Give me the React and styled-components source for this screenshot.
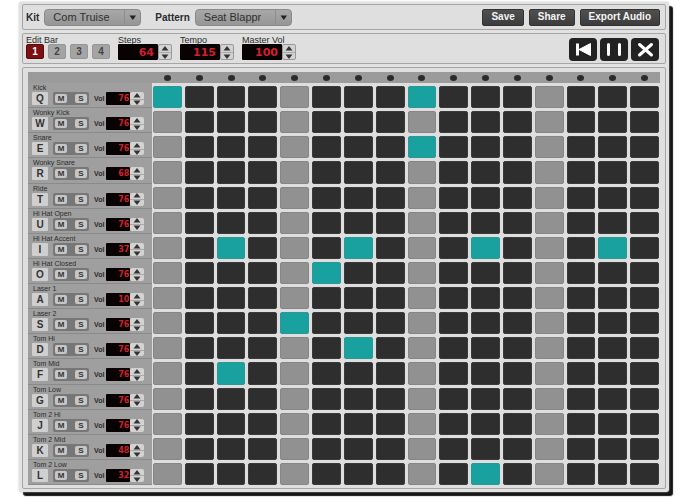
import React, { useState } from 'react'
import styled, { createGlobalStyle } from 'styled-components'


const GlobalStyle = createGlobalStyle`
* { box-sizing: border-box; }
body {
  margin: 0;
  background: #fff;
  color: #2b2b2b;
  font-family: "Liberation Sans", Arial, sans-serif;
}
button, input, select { font-family: inherit; margin: 0; }
button { cursor: pointer; }
`
const Page = styled.main`
padding: 2px 27px 5px 19px;
`
const Machine = styled.div`
display: flex;
flex-direction: column;
gap: 3px;
padding: 2px 3px 3px;
background: #e2e2e2;
border-radius: 3px;
box-shadow: 0 0 2px #bbb, 4px 4px 1px #141414;
`
const Panel = styled.section`
border: 1px solid #a6a6a6;
border-radius: 2px;
background: #dfdfdf;
`
const TopBar = styled(Panel)`
display: flex;
align-items: center;
height: 26px;
padding: 0 5px 0 3px;
`
const Field = styled.label`
display: flex;
align-items: center;
gap: 5px;
margin-right: 14px;
font-size: 10px;
font-weight: bold;
`
const SelectBox = styled.span`
display: flex;
position: relative;
svg {
  position: absolute;
  right: 0;
  top: 0;
  pointer-events: none;
}
`
const Select = styled.select`
appearance: none;
width: 97px;
height: 17px;
padding: 0 20px 0 8px;
border: 1px solid #8a8a8a;
border-radius: 4px;
background: linear-gradient(#a8a8a8, #969696);
color: #303030;
font-size: 11px;
`
const Actions = styled.div`
display: flex;
gap: 5px;
margin-left: auto;
`
const DarkButton = styled.button`
height: 17px;
padding: 0 8px;
border: 1px solid #333;
border-radius: 2px;
background: linear-gradient(#505050, #3c3c3c);
color: #f4f4f4;
font-size: 10px;
font-weight: bold;
line-height: 12px;
`
const ControlBar = styled(Panel)`
display: flex;
align-items: flex-start;
gap: 8px;
height: 31px;
padding: 2px 6px 0 3px;
`
const Group = styled.div`
display: flex;
flex-direction: column;
font-size: 9px;
line-height: 8px;
`
const BarButtons = styled.div`
display: flex;
gap: 4px;
`
const BarButton = styled.button`
width: 18px;
height: 15px;
padding: 0;
border: 1px solid ${({ $active }) => ($active ? '#5a0a0c' : '#969696')};
border-radius: 2px;
background: ${({ $active }) => ($active ? '#7c1013' : '#a4a4a4')};
color: ${({ $active }) => ($active ? '#fff' : '#444')};
font-size: 10px;
font-weight: bold;
line-height: 12px;
`
const Transport = styled.div`
display: flex;
align-self: center;
gap: 3px;
margin-left: auto;
`
const TransportButton = styled.button`
display: flex;
width: 28px;
height: 23px;
padding: 0;
border: 0;
border-radius: 4px;
background: #222;
`
const NumberBox = styled.span`
display: flex;
height: ${({ $small }) => ($small ? '13px' : '16px')};
`
const Lcd = styled.input`
width: ${({ $small }) => ($small ? '24px' : '40px')};
height: 100%;
padding: ${({ $small }) => ($small ? '0 1px 0 0' : '0 4px 0 0')};
border: 0;
border-radius: 1px;
background: #080203;
color: #d0202b;
font-family: "DejaVu Sans", Verdana, sans-serif;
font-size: ${({ $small }) => ($small ? '8px' : '11px')};
font-weight: bold;
text-align: right;
`
const Arrows = styled.span`
display: grid;
grid-template-rows: 1fr 1fr;
width: 14px;
border: ${({ $small }) => ($small ? '0' : '1px solid #999')};
border-radius: 2px;
background: #d3d3d3;
`
const Arrow = styled.button`
display: flex;
align-items: center;
justify-content: center;
min-height: 0;
padding: 0;
border: 0;
background: none;
& + & {
  border-top: 1px solid #aaa;
}
`
const Sequencer = styled(Panel)`
padding: 4px 5px 3px;
`
const Grid = styled.div`
display: grid;
grid-template-columns: 124px 1fr;
grid-template-rows: 11px repeat(16, 1fr);
height: 413px;
`
const Corner = styled.div`
background: #9b9b9b;
`
const Dots = styled.div`
display: grid;
grid-template-columns: repeat(16, 1fr);
column-gap: 3px;
align-items: center;
justify-items: center;
padding: 0 1px;
background: #9b9b9b;
`
const Dot = styled.span`
width: 7px;
height: 6px;
border-radius: 50%;
background: #2b2b2b;
`
const Track = styled.div`
display: flex;
flex-direction: column;
min-height: 0;
padding-left: 4px;
border-bottom: 1px solid #8a8a8a;
background: #9f9f9f;
`
const TrackName = styled.span`
font-size: 7px;
line-height: 9px;
padding-left: 1px;
`
const TrackControls = styled.div`
display: flex;
align-items: center;
`
const KeyButton = styled.button`
width: 16px;
height: 13px;
padding: 0;
border: 0;
border-radius: 1px;
background: #cfcfcf;
color: #333;
font-size: 10px;
font-weight: bold;
line-height: 13px;
`
const MuteSolo = styled.div`
display: flex;
justify-content: space-between;
align-items: center;
width: 36px;
height: 13px;
margin: 0 5px;
padding: 0 2px;
border-radius: 2px;
background: #777;
`
const SmallButton = styled.button`
width: 12px;
height: 9px;
padding: 0;
border: 0;
border-radius: 2px;
background: #c6c6c6;
color: #333;
font-size: 8px;
font-weight: bold;
line-height: 9px;
`
const Volume = styled.label`
display: flex;
align-items: center;
gap: 2px;
font-size: 7px;
font-weight: bold;
`
const Steps = styled.div`
display: grid;
grid-template-columns: repeat(16, 1fr);
gap: 3px;
min-height: 0;
padding: 3px 1px 0;
background: #dedede;
`
const Step = styled.button`
min-width: 0;
padding: 0;
border: 1px solid ${({ $on, $beat }) => ($on ? '#2b9796' : $beat ? '#868686' : '#3a3a3a')};
border-radius: 2px;
background: ${({ $on, $beat }) => ($on ? '#18a19f' : $beat ? '#919191' : '#2e2e2e')};
`

const TRACKS = [
  { key: 'Q', name: 'Kick', vol: 76, hits: [0, 8] },
  { key: 'W', name: 'Wonky Kick', vol: 76, hits: [] },
  { key: 'E', name: 'Snare', vol: 76, hits: [8] },
  { key: 'R', name: 'Wonky Snare', vol: 68, hits: [] },
  { key: 'T', name: 'Ride', vol: 76, hits: [] },
  { key: 'U', name: 'Hi Hat Open', vol: 76, hits: [] },
  { key: 'I', name: 'Hi Hat Accent', vol: 37, hits: [2, 6, 10, 14] },
  { key: 'O', name: 'Hi Hat Closed', vol: 76, hits: [5] },
  { key: 'A', name: 'Laser 1', vol: 10, hits: [] },
  { key: 'S', name: 'Laser 2', vol: 76, hits: [4] },
  { key: 'D', name: 'Tom Hi', vol: 76, hits: [6] },
  { key: 'F', name: 'Tom Mid', vol: 76, hits: [2] },
  { key: 'G', name: 'Tom Low', vol: 76, hits: [] },
  { key: 'J', name: 'Tom 2 Hi', vol: 76, hits: [] },
  { key: 'K', name: 'Tom 2 Mid', vol: 48, hits: [] },
  { key: 'L', name: 'Tom 2 Low', vol: 32, hits: [10] },
]
const COLUMNS = Array.from({ length: 16 }, (_, i) => i)

function NumberField({ id, label, initial, small }) {
  const [value, setValue] = useState(initial)
  return (
    <NumberBox $small={small}>
      <Lcd id={id} $small={small} inputMode="numeric" value={value}
        onChange={(e) => setValue(Number(e.target.value) || 0)} />
      <Arrows $small={small}>
        <Arrow type="button" aria-label={`${label} up`} onClick={() => setValue(value + 1)}>
          <svg width="8" height="5" viewBox="0 0 8 5"><path d="M4 0L7.5 4.6H.5z" fill="#333" /></svg>
        </Arrow>
        <Arrow type="button" aria-label={`${label} down`} onClick={() => setValue(value - 1)}>
          <svg width="8" height="5" viewBox="0 0 8 5"><path d="M4 5L7.5 .4H.5z" fill="#333" /></svg>
        </Arrow>
      </Arrows>
    </NumberBox>
  )
}

function Dropdown({ label, option }) {
  return (
    <Field>
      {label}
      <SelectBox>
        <Select defaultValue={option}>
          <option>{option}</option>
        </Select>
        <svg width="18" height="17" viewBox="0 0 18 17">
          <path d="M1.5 1v15" stroke="#8c8c8c" />
          <path d="M6.5 6.5h6.5L9.8 11z" fill="#222" />
        </svg>
      </SelectBox>
    </Field>
  )
}

function App() {
  const [bar, setBar] = useState(1)
  const [pattern, setPattern] = useState(TRACKS.map((t) => t.hits))

  const toggle = (row, col) => {
    setPattern(pattern.map((hits, i) => {
      if (i !== row) return hits
      return hits.includes(col) ? hits.filter((c) => c !== col) : [...hits, col]
    }))
  }

  return (
    <>
      <GlobalStyle />
      <Page>
        <Machine>

          <TopBar>
            <Dropdown label="Kit" option="Com Truise" />
            <Dropdown label="Pattern" option="Seat Blappr" />
            <Actions>
              <DarkButton>Save</DarkButton>
              <DarkButton>Share</DarkButton>
              <DarkButton>Export Audio</DarkButton>
            </Actions>
          </TopBar>

          <ControlBar>
            <Group>
              <span>Edit Bar</span>
              <BarButtons>
                {[1, 2, 3, 4].map((n) => (
                  <BarButton key={n} $active={bar === n} onClick={() => setBar(n)}>{n}</BarButton>
                ))}
              </BarButtons>
            </Group>
            <Group>
              <label htmlFor="steps">Steps</label>
              <NumberField id="steps" label="Steps" initial={64} />
            </Group>
            <Group>
              <label htmlFor="tempo">Tempo</label>
              <NumberField id="tempo" label="Tempo" initial={115} />
            </Group>
            <Group>
              <label htmlFor="master">Master Vol</label>
              <NumberField id="master" label="Master Vol" initial={100} />
            </Group>
            <Transport>
              <TransportButton aria-label="Rewind">
                <svg width="28" height="23" viewBox="0 0 28 23">
                  <path d="M8.5 5.5v12" stroke="#fff" strokeWidth="3" />
                  <path d="M21.5 5.5v12L10 11.5z" fill="#fff" stroke="#fff" strokeLinejoin="round" />
                </svg>
              </TransportButton>
              <TransportButton aria-label="Pause">
                <svg width="28" height="23" viewBox="0 0 28 23">
                  <path d="M8.5 6.5v10M19.5 6.5v10" stroke="#fff" strokeWidth="3" strokeLinecap="round" />
                </svg>
              </TransportButton>
              <TransportButton aria-label="Clear">
                <svg width="28" height="23" viewBox="0 0 28 23">
                  <path d="M8.5 6.5l12 10.5M20.5 6.5L8.5 17" stroke="#fff" strokeWidth="3" strokeLinecap="round" />
                </svg>
              </TransportButton>
            </Transport>
          </ControlBar>

          <Sequencer>
            <Grid>
              <Corner />
              <Dots>
                {COLUMNS.map((c) => <Dot key={c} />)}
              </Dots>
              {TRACKS.map((track, row) => (
                <React.Fragment key={track.key}>
                  <Track>
                    <TrackName>{track.name}</TrackName>
                    <TrackControls>
                      <KeyButton>{track.key}</KeyButton>
                      <MuteSolo>
                        <SmallButton aria-label={`Mute ${track.name}`}>M</SmallButton>
                        <SmallButton aria-label={`Solo ${track.name}`}>S</SmallButton>
                      </MuteSolo>
                      <Volume htmlFor={`vol-${track.key}`}>
                        Vol
                        <NumberField id={`vol-${track.key}`} label={`${track.name} volume`} initial={track.vol} small />
                      </Volume>
                    </TrackControls>
                  </Track>
                  <Steps>
                    {COLUMNS.map((col) => (
                      <Step key={col} $beat={col % 4 === 0} $on={pattern[row].includes(col)}
                        aria-label={`${track.name} step ${col + 1}`}
                        aria-pressed={pattern[row].includes(col)}
                        onClick={() => toggle(row, col)} />
                    ))}
                  </Steps>
                </React.Fragment>
              ))}
            </Grid>
          </Sequencer>

        </Machine>
      </Page>
    </>
  )
}

export default App
